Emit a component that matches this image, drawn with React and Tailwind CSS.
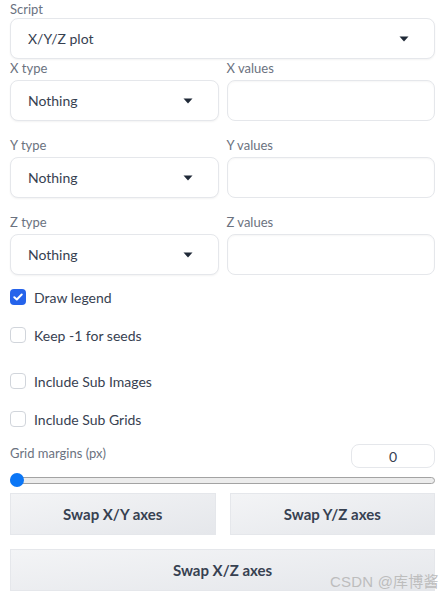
import React from "react";

const font = { fontFamily: "Lato, 'Noto Sans CJK SC', sans-serif" };

function Arrow() {
  return (
    <svg width="10" height="6" viewBox="0 0 10 6" className="shrink-0">
      <path d="M0.5 0.5 L9.5 0.5 L5 5.5 Z" fill="#1f2937" />
    </svg>
  );
}

function Select({ value, className = "" }) {
  return (
    <div className={`flex items-center justify-between rounded-lg border border-[#e5e7eb] bg-white shadow-[0_1px_2px_rgba(0,0,0,0.05)] pl-[17px] pr-[25px] ${className}`}>
      <span className="text-[14px] text-[#374151]">{value}</span>
      <Arrow />
    </div>
  );
}

function TextBox({ className = "" }) {
  return <div className={`rounded-lg border border-[#e5e7eb] bg-white shadow-[inset_0_1px_2px_rgba(0,0,0,0.04)] ${className}`} />;
}

function Label({ children }) {
  return <div className="text-[13px] leading-[16px] text-[#6b7280]">{children}</div>;
}

function Check({ checked, label, className = "" }) {
  return (
    <div className={`flex items-center gap-[8px] ${className}`}>
      {checked ? (
        <div className="w-[16px] h-[16px] rounded-[4px] bg-[#2563eb] flex items-center justify-center">
          <svg width="10" height="8" viewBox="0 0 10 8">
            <path d="M1.3 4.2 L3.8 6.5 L8.7 1.5" stroke="white" strokeWidth="2" fill="none" strokeLinecap="round" strokeLinejoin="round" />
          </svg>
        </div>
      ) : (
        <div className="w-[16px] h-[16px] rounded-[4px] border border-[#d1d5db] bg-white" />
      )}
      <span className="text-[14px] text-[#374151]">{label}</span>
    </div>
  );
}

function Button({ children, className = "" }) {
  return (
    <div className={`flex items-center justify-center border border-[#e5e7eb] bg-gradient-to-br from-[#f3f4f6] to-[#e5e7eb] text-[15px] font-bold text-[#374151] ${className}`}>
      {children}
    </div>
  );
}

export default function App() {
  return (
    <div className="w-[445px] h-[598px] bg-white relative px-[10px] pt-[1px]" style={font}>
      <Label>Script</Label>
      <Select value="X/Y/Z plot" className="mt-[1px] h-[41px] pr-[24px]" />

      <div className="grid grid-cols-2 gap-x-[8px] mt-[1px]">
        <div>
          <Label>X type</Label>
          <Select value="Nothing" className="mt-[4px] h-[41px]" />
        </div>
        <div>
          <Label>X values</Label>
          <TextBox className="mt-[4px] h-[41px]" />
        </div>
      </div>

      <div className="grid grid-cols-2 gap-x-[8px] mt-[16px]">
        <div>
          <Label>Y type</Label>
          <Select value="Nothing" className="mt-[4px] h-[41px]" />
        </div>
        <div>
          <Label>Y values</Label>
          <TextBox className="mt-[4px] h-[41px]" />
        </div>
      </div>

      <div className="grid grid-cols-2 gap-x-[8px] mt-[16px]">
        <div>
          <Label>Z type</Label>
          <Select value="Nothing" className="mt-[4px] h-[41px]" />
        </div>
        <div>
          <Label>Z values</Label>
          <TextBox className="mt-[4px] h-[41px]" />
        </div>
      </div>

      <Check checked label="Draw legend" className="mt-[13px] h-[18px]" />
      <Check label="Keep -1 for seeds" className="mt-[20px] h-[18px]" />
      <Check label="Include Sub Images" className="mt-[28px] h-[18px]" />
      <Check label="Include Sub Grids" className="mt-[20px] h-[18px]" />

      <div className="flex items-start justify-between mt-[16px]">
        <div className="pt-[1px]"><Label>Grid margins (px)</Label></div>
        <div className="w-[84px] h-[24px] rounded-lg border border-[#e5e7eb] bg-white flex items-center justify-center text-[14px] text-[#374151]">0</div>
      </div>

      <div className="relative mt-[5px] h-[14px] flex items-center">
        <div className="w-full h-[7px] rounded-full border border-[#a3a3a3] bg-[#ececec]" />
        <div className="absolute left-0 top-0 w-[14px] h-[14px] rounded-full bg-[#0b76f6]" />
      </div>

      <div className="grid grid-cols-2 gap-x-[14px] mt-[6px]">
        <Button className="h-[42px]">Swap X/Y axes</Button>
        <Button className="h-[42px]">Swap Y/Z axes</Button>
      </div>
      <Button className="h-[42px] mt-[14px]">Swap X/Z axes</Button>

      <div className="absolute left-[330px] top-[571px] text-[15px] text-[#bdbdbd] tracking-[0.2px]" style={{ fontFamily: "'Liberation Sans', 'Noto Sans CJK SC', sans-serif" }}>
        CSDN @库博酱
      </div>
    </div>
  );
}
